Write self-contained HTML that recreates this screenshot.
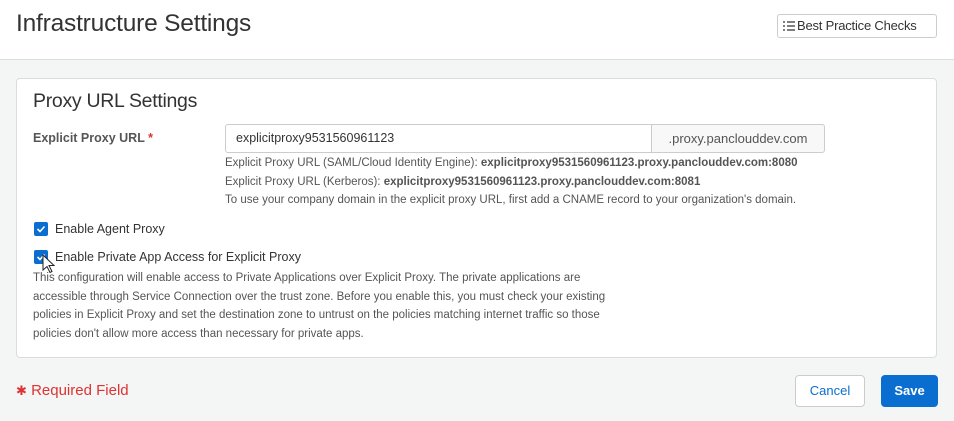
<!DOCTYPE html>
<html><head><style>
*{box-sizing:border-box;margin:0;padding:0}
body{width:954px;height:421px;background:#f4f5f5;font-family:"Liberation Sans",sans-serif;position:relative;overflow:hidden;color:#333}
.hdr{position:absolute;left:0;top:0;width:954px;height:60px;background:#fff;border-bottom:1px solid #dcdcdc}
.t{position:absolute;left:16px;top:10px;font-size:24.5px;color:#333;letter-spacing:-0.2px}
.bp{position:absolute;left:777px;top:14px;width:160px;height:24px;border:1px solid #ccc;border-radius:3px;font-size:13px;line-height:22px;padding-left:19px;color:#333;letter-spacing:-0.2px}
.card{position:absolute;left:16px;top:78px;width:921px;height:280px;background:#fff;border:1px solid #dcdcdc;border-radius:4px}
.a{position:absolute;white-space:nowrap}
.s{font-size:11.5px;color:#555;letter-spacing:0}
.cb{position:absolute;width:14px;height:14px;background:#0a6ed1;border-radius:2px}
.btn{position:absolute;top:375px;height:32px;border-radius:4px;font-size:13px;text-align:center;line-height:30px}
</style></head><body>
<div class="hdr"><div class="t">Infrastructure Settings</div>
<div class="bp"><svg style="position:absolute;left:5px;top:6px" width="12" height="10"><path d="M0 1h2M0 5h2M0 9h2M4 1h8M4 5h8M4 9h8" stroke="#333" stroke-width="1.3"/></svg>Best Practice Checks</div></div>
<div class="card">
<div class="a" style="left:16px;top:11px;font-size:19.5px;color:#333;letter-spacing:-0.3px">Proxy URL Settings</div>
<div class="a" style="left:16px;top:52px;font-size:12.5px;font-weight:bold;color:#555">Explicit Proxy URL <span style="color:#d33">*</span></div>
<div class="a" style="left:208px;top:45px;width:427px;height:29px;border:1px solid #ccc;border-radius:3px 0 0 3px;font-size:12.5px;line-height:27px;padding-left:10px;color:#333">explicitproxy9531560961123</div>
<div class="a" style="left:634px;top:45px;width:174px;height:29px;border:1px solid #ccc;border-radius:0 3px 3px 0;background:#f8f8f8;font-size:13px;line-height:27px;text-align:center;color:#555">.proxy.panclouddev.com</div>
<div class="a s" style="left:208px;top:78px">Explicit Proxy URL (SAML/Cloud Identity Engine): <b>explicitproxy9531560961123.proxy.panclouddev.com:8080</b></div>
<div class="a s" style="left:208px;top:97px">Explicit Proxy URL (Kerberos): <b>explicitproxy9531560961123.proxy.panclouddev.com:8081</b></div>
<div class="a s" style="left:208px;top:115px">To use your company domain in the explicit proxy URL, first add a CNAME record to your organization's domain.</div>
<div class="cb" style="left:17px;top:143px"></div><svg class="a" style="left:17px;top:143px" width="14" height="14"><path d="M3.5 7l2.5 2.5 4.5-5" stroke="#fff" stroke-width="1.6" fill="none"/></svg>
<div class="a" style="left:38px;top:143px;font-size:12.5px;color:#333">Enable Agent Proxy</div>
<div class="cb" style="left:17px;top:171px"></div><svg class="a" style="left:17px;top:171px" width="14" height="14"><path d="M3.5 7l2.5 2.5 4.5-5" stroke="#fff" stroke-width="1.6" fill="none"/></svg>
<div class="a" style="left:38px;top:171px;font-size:12.5px;color:#333">Enable Private App Access for Explicit Proxy</div>
<div class="a s" style="left:16px;top:190px;line-height:18.5px;white-space:normal;width:600px">This configuration will enable access to Private Applications over Explicit Proxy. The private applications are accessible through Service Connection over the trust zone. Before you enable this, you must check your existing policies in Explicit Proxy and set the destination zone to untrust on the policies matching internet traffic so those policies don't allow more access than necessary for private apps.</div>
</div>
<svg class="a" style="left:42px;top:254px" width="14" height="20"><path d="M1 1v15l4-3.5 3 6 2-1-3-6h5z" fill="#fff" stroke="#222" stroke-width="1"/></svg>
<div class="a" style="left:16px;top:382px;font-size:15px;color:#d33"><span style="font-size:13px">✱</span> Required Field</div>
<div class="btn" style="left:795px;width:70px;background:#fff;border:1px solid #ccc;color:#0a6ed1">Cancel</div>
<div class="btn" style="left:881px;width:57px;background:#0a6ed1;color:#fff;font-weight:bold;line-height:32px">Save</div>
</body></html>
